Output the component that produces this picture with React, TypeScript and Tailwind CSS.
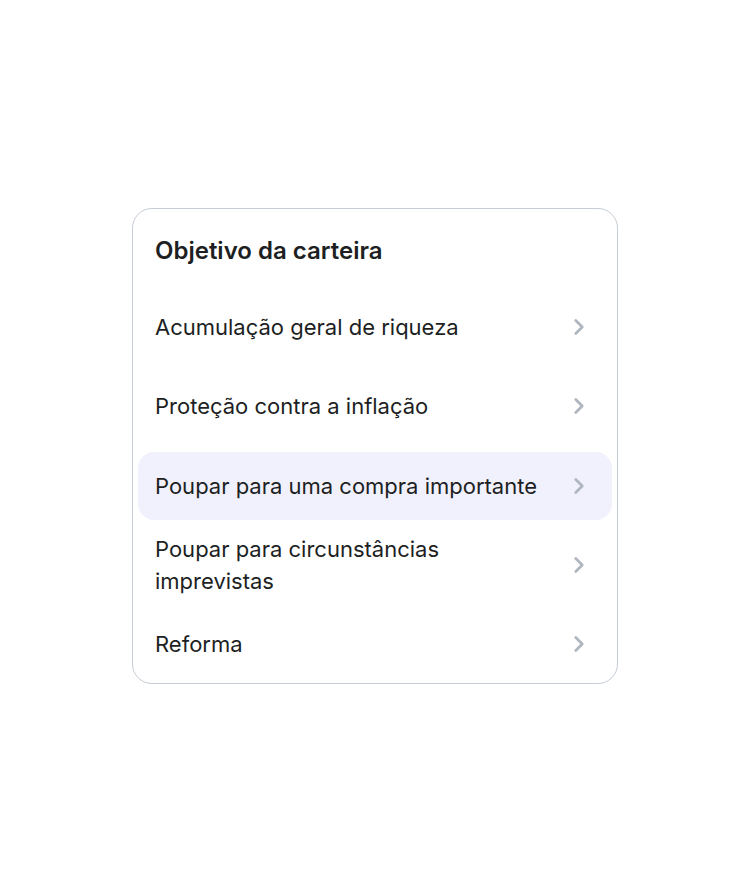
import { ChevronRight } from "lucide-react";

const goals = [
  { label: "Acumulação geral de riqueza" },
  { label: "Proteção contra a inflação" },
  { label: "Poupar para uma compra importante", active: true },
  { label: "Poupar para circunstâncias imprevistas" },
  { label: "Reforma" },
];

export default function App() {
  return (
    <div
      className="min-h-[892px] w-full bg-white pt-[208px]"
      style={{ fontFamily: "Inter, 'Noto Sans', sans-serif" }}
    >
      <div className="mx-auto w-[486px] h-[476px] rounded-[20px] border border-[#c6ccd5] px-[5px] pb-[5px] flex flex-col">
        <h2 className="pl-[17px] h-[84px] flex items-center text-[24px] font-semibold text-[#1d1f23]">
          Objetivo da carteira
        </h2>
        <div className="flex flex-col gap-[11.25px]">
          {goals.map((g) => (
            <button
              key={g.label}
              className={
                "h-[68px] rounded-[16px] pl-[17px] pr-[20px] flex items-center justify-between gap-4 text-left " +
                (g.active ? "bg-[#f1f1fd]" : "")
              }
            >
              <span className="text-[22px] leading-[32px] text-[#1d1f23] max-w-[400px]">
                {g.label}
              </span>
              <ChevronRight className="w-[26px] h-[26px] shrink-0 text-[#afb6c0]" strokeWidth={2.5} />
            </button>
          ))}
        </div>
      </div>
    </div>
  );
}
